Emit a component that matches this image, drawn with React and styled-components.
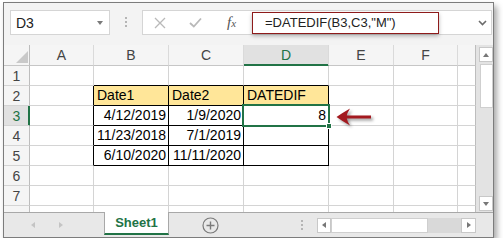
import React from "react";
import styled, { createGlobalStyle } from "styled-components";

const GlobalStyle = createGlobalStyle`
  html, body { margin: 0; padding: 0; background: #ffffff; }
  body { font-family: "Liberation Sans", Arial, sans-serif; }
`;

const GREEN = "#217346";
const GRID = "#d4d4d4";

const Page = styled.div`
  padding: 2px 0 0 3px;
`;

const Window = styled.div`
  width: 491px;
  height: 236px;
  box-sizing: border-box;
  border: 1px solid #7c7c7c;
  background: #f3f3f3;
  display: flex;
  flex-direction: column;
  box-shadow: 3px 4px 6px rgba(0, 0, 0, 0.35);
`;

const FormulaBar = styled.div`
  height: 42px;
  flex: none;
  box-sizing: border-box;
  padding: 7px 0 0 6px;
  display: flex;
  align-items: flex-start;
`;

const NameBox = styled.div`
  width: 100px;
  height: 25px;
  box-sizing: border-box;
  background: #fff;
  border: 1px solid #d5d5d5;
  display: flex;
  align-items: center;
  padding: 0 6px 0 5px;
  font-size: 14px;
  color: #222;
`;

const Caret = styled.span`
  margin-left: auto;
  width: 0;
  height: 0;
  border-left: 3.5px solid transparent;
  border-right: 3.5px solid transparent;
  border-top: 4px solid #7a7a7a;
`;

const Grip = styled.div`
  flex: none;
  width: 2px;
  height: 10px;
  margin: ${(p) => p.$top ?? 7}px ${(p) => p.$right ?? 15}px 0 ${(p) => p.$left ?? 15}px;
  background: repeating-linear-gradient(to bottom, #b5b5b5 0 2px, transparent 2px 4px);
`;

const FormulaBox = styled.div`
  width: 350px;
  height: 25px;
  box-sizing: border-box;
  background: #fff;
  border: 1px solid #d5d5d5;
  display: flex;
  align-items: center;
`;

const IconGroup = styled.div`
  width: 107px;
  height: 100%;
  flex: none;
  display: grid;
  grid-template-columns: 34px 37px 35px;
  align-items: center;
  justify-items: center;
`;

const Fx = styled.span`
  font-family: "Liberation Serif", "Times New Roman", serif;
  font-style: italic;
  font-size: 15px;
  color: #555;
  line-height: 1;
  small {
    font-size: 11px;
  }
`;

const FormulaText = styled.div`
  margin-left: 2px;
  width: 187px;
  height: 22px;
  box-sizing: border-box;
  border: 1px solid #8e1b1b;
  background: #fff;
  padding-left: 12px;
  font-size: 13px;
  line-height: 20px;
  color: #222;
  white-space: nowrap;
  box-shadow: 0 2px 4px rgba(0, 0, 0, 0.28);
`;

const Chevron = styled.svg`
  margin-left: auto;
  margin-right: 4px;
`;

const SheetArea = styled.div`
  display: flex;
  height: 167px;
  flex: none;
`;

const Grid = styled.div`
  display: grid;
  grid-template-columns: 26px 64px 75px 75px 85px 65px 64px 18px;
  grid-template-rows: 21px repeat(7, 20px) 6px;
  background: #fff;
`;

const Corner = styled.div`
  box-sizing: border-box;
  background: #f5f5f5;
  border-right: 1px solid #bdbdbd;
  border-bottom: 1px solid #c6c6c6;
  display: flex;
  align-items: flex-end;
  justify-content: flex-end;
  padding: 0 1px 2px 0;
`;

const Triangle = styled.div`
  width: 12px;
  height: 12px;
  background: #c9c9c9;
  clip-path: polygon(100% 0, 100% 100%, 0 100%);
`;

const ColHead = styled.div`
  box-sizing: border-box;
  background: ${(p) => (p.$active ? "#e1e1e1" : "#f5f5f5")};
  color: ${(p) => (p.$active ? GREEN : "#444")};
  border-right: 1px solid ${(p) => (p.$last ? "#bdbdbd" : "#dadada")};
  border-bottom: 1px solid ${(p) => (p.$active ? GREEN : "#c6c6c6")};
  box-shadow: ${(p) => (p.$active ? `inset 0 -1px 0 ${GREEN}` : "none")};
  display: flex;
  align-items: center;
  justify-content: center;
  font-size: 14px;
`;

const RowHead = styled.div`
  box-sizing: border-box;
  background: ${(p) => (p.$active ? "#e1e1e1" : "#f5f5f5")};
  color: ${(p) => (p.$active ? GREEN : "#444")};
  border-right: 1px solid ${(p) => (p.$active ? GREEN : "#bdbdbd")};
  border-bottom: ${(p) => (p.$noBottom ? "none" : `1px solid ${GRID}`)};
  box-shadow: ${(p) => (p.$active ? `inset -1px 0 0 ${GREEN}` : "none")};
  display: flex;
  align-items: center;
  justify-content: center;
  font-size: 14px;
`;

const Cell = styled.div`
  position: relative;
  box-sizing: border-box;
  background: ${(p) => p.$bg || "#fff"};
  border-right: 1px solid ${(p) => p.$r || GRID};
  border-bottom: ${(p) => (p.$noBottom ? "none" : `1px solid ${p.$b || GRID}`)};
  padding: 0 2px 0 3px;
  font-size: 14px;
  line-height: 19px;
  color: #000;
  text-align: ${(p) => p.$align || "left"};
  white-space: nowrap;
`;

const SelBox = styled.div`
  position: absolute;
  top: -2px;
  left: -2px;
  right: -2px;
  bottom: -2px;
  border: 2px solid ${GREEN};
  pointer-events: none;
  z-index: 2;
`;

const FillHandle = styled.div`
  position: absolute;
  right: -4px;
  bottom: -4px;
  width: 6px;
  height: 6px;
  box-sizing: border-box;
  background: ${GREEN};
  border: 1px solid #fff;
  z-index: 3;
`;

const ArrowMark = styled.svg`
  position: absolute;
  left: 6px;
  top: 0;
  z-index: 3;
  filter: drop-shadow(2px 2px 1.5px rgba(0, 0, 0, 0.4));
`;

const VScroll = styled.div`
  width: 17px;
  box-sizing: border-box;
  background: #e3e3e3;
  padding: 2px 0 1px 3px;
  display: flex;
  flex-direction: column;
`;

const ScrollBtn = styled.div`
  width: ${(p) => p.$w || 14}px;
  height: 15px;
  flex: none;
  box-sizing: border-box;
  background: #fff;
  border: 1px solid #c8c8c8;
  display: flex;
  align-items: center;
  justify-content: center;
  margin-top: ${(p) => (p.$bottom ? "auto" : "0")};
`;

const Tri = styled.span`
  width: 0;
  height: 0;
  ${(p) =>
    p.$dir === "up"
      ? `border-left: 3.5px solid transparent; border-right: 3.5px solid transparent; border-bottom: 4px solid ${p.$c || "#777"};`
      : p.$dir === "down"
      ? `border-left: 3.5px solid transparent; border-right: 3.5px solid transparent; border-top: 4px solid ${p.$c || "#777"};`
      : p.$dir === "left"
      ? `border-top: 3.5px solid transparent; border-bottom: 3.5px solid transparent; border-right: 4px solid ${p.$c || "#777"};`
      : `border-top: 3.5px solid transparent; border-bottom: 3.5px solid transparent; border-left: 4px solid ${p.$c || "#777"};`}
`;

const VThumb = styled.div`
  width: 13px;
  height: 44px;
  margin: 2px 0 0 1px;
  box-sizing: border-box;
  background: #fff;
  border: 1px solid #cfcfcf;
`;

const TabBar = styled.div`
  height: 25px;
  flex: none;
  box-sizing: border-box;
  border-top: 1px solid #a8a8a8;
  background: #e8e8e8;
  display: flex;
  align-items: center;
`;

const NavArea = styled.div`
  width: 100px;
  flex: none;
  display: flex;
  align-items: center;
  gap: 24px;
  padding-left: 27px;
  box-sizing: border-box;
`;

const SheetTab = styled.div`
  width: 65px;
  height: 23px;
  flex: none;
  align-self: flex-start;
  margin-top: -1px;
  box-sizing: border-box;
  background: #fff;
  border-left: 1px solid #a8a8a8;
  border-right: 1px solid #a8a8a8;
  border-bottom: 2px solid ${GREEN};
  display: flex;
  align-items: center;
  justify-content: center;
  font-weight: bold;
  font-size: 13px;
  color: ${GREEN};
`;

const AddBtn = styled.svg`
  margin-left: 33px;
  flex: none;
`;

const HScroll = styled.div`
  display: flex;
  height: 15px;
`;

const HThumb = styled.div`
  width: 97px;
  box-sizing: border-box;
  background: #fff;
  border: 1px solid #cfcfcf;
`;

const HTrack = styled.div`
  width: 33px;
  background: #d9d9d9;
`;

const cols = ["A", "B", "C", "D", "E", "F", ""];
const data = {
  2: ["", "Date1", "Date2", "DATEDIF"],
  3: ["", "4/12/2019", "1/9/2020", "8"],
  4: ["", "11/23/2018", "7/1/2019", ""],
  5: ["", "6/10/2020", "11/11/2020", ""],
};

function renderCell(r, c) {
  const inTable = r >= 2 && r <= 5 && c >= 1 && c <= 3;
  let right;
  let bottom;
  if (inTable) {
    right = "#000";
    bottom = "#000";
  }
  if (c === 0 && r >= 2 && r <= 5) right = "#000";
  if (r === 1 && c >= 1 && c <= 3) bottom = "#000";
  if (c === 6) right = "#bdbdbd";
  const text = data[r] ? data[r][c] || "" : "";
  const isHeader = r === 2 && inTable;
  const selected = r === 3 && c === 3;
  return (
    <Cell
      key={`${r}-${c}`}
      $r={right}
      $b={bottom}
      $bg={isHeader ? "#ffe699" : undefined}
      $align={inTable && !isHeader ? "right" : "left"}
      $noBottom={r === 8}
    >
      {text}
      {selected && (
        <>
          <SelBox />
          <FillHandle />
        </>
      )}
      {r === 3 && c === 4 && (
        <ArrowMark width="40" height="22" viewBox="0 0 40 22">
          <path
            d="M1.5 11 Q8 6.5 15 2.5 Q12.2 7 11.8 9.6 L36 9.6 L36 12.4 L11.8 12.4 Q12.2 15 15 19.5 Q8 15.5 1.5 11 Z"
            fill="#a3191f"
          />
        </ArrowMark>
      )}
    </Cell>
  );
}

export default function App() {
  const rows = [1, 2, 3, 4, 5, 6, 7, 8];
  return (
    <Page>
      <GlobalStyle />
      <Window>
        <FormulaBar>
          <NameBox>
            D3
            <Caret />
          </NameBox>
          <Grip />
          <FormulaBox>
            <IconGroup>
              <svg width="12" height="12" viewBox="0 0 12 12">
                <path d="M1 1 L11 11 M11 1 L1 11" stroke="#b9b9b9" strokeWidth="1.3" fill="none" />
              </svg>
              <svg width="13" height="11" viewBox="0 0 13 11">
                <path d="M1 6 L4.8 9.5 L12 1.5" stroke="#b9b9b9" strokeWidth="1.8" fill="none" />
              </svg>
              <Fx>
                f<small>x</small>
              </Fx>
            </IconGroup>
            <FormulaText>=DATEDIF(B3,C3,"M")</FormulaText>
            <Chevron width="9" height="6" viewBox="0 0 9 6">
              <path d="M1 1 L4.5 4.5 L8 1" stroke="#6b6b6b" strokeWidth="1.6" fill="none" />
            </Chevron>
          </FormulaBox>
        </FormulaBar>
        <SheetArea>
          <Grid>
            <Corner>
              <Triangle />
            </Corner>
            {cols.map((c, i) => (
              <ColHead key={i} $active={c === "D"} $last={i === 6}>
                {c}
              </ColHead>
            ))}
            {rows.map((r) => (
              <React.Fragment key={r}>
                <RowHead $active={r === 3} $noBottom={r === 8}>
                  {r < 8 ? r : ""}
                </RowHead>
                {cols.map((_, c) => renderCell(r, c))}
              </React.Fragment>
            ))}
          </Grid>
          <VScroll>
            <ScrollBtn>
              <Tri $dir="up" />
            </ScrollBtn>
            <VThumb />
            <ScrollBtn $bottom>
              <Tri $dir="down" />
            </ScrollBtn>
          </VScroll>
        </SheetArea>
        <TabBar>
          <NavArea>
            <Tri $dir="left" $c="#c4c4c4" />
            <Tri $dir="right" $c="#c4c4c4" />
          </NavArea>
          <SheetTab>Sheet1</SheetTab>
          <AddBtn width="17" height="17" viewBox="0 0 17 17">
            <circle cx="8.5" cy="8.5" r="7.5" stroke="#7a7a7a" strokeWidth="1.2" fill="none" />
            <path d="M8.5 4.5 V12.5 M4.5 8.5 H12.5" stroke="#7a7a7a" strokeWidth="1.4" />
          </AddBtn>
          <Grip $top={0} $left={82} $right={14} />
          <HScroll>
            <ScrollBtn $w={14}>
              <Tri $dir="left" />
            </ScrollBtn>
            <HThumb />
            <HTrack />
            <ScrollBtn $w={15}>
              <Tri $dir="right" />
            </ScrollBtn>
          </HScroll>
        </TabBar>
      </Window>
    </Page>
  );
}
